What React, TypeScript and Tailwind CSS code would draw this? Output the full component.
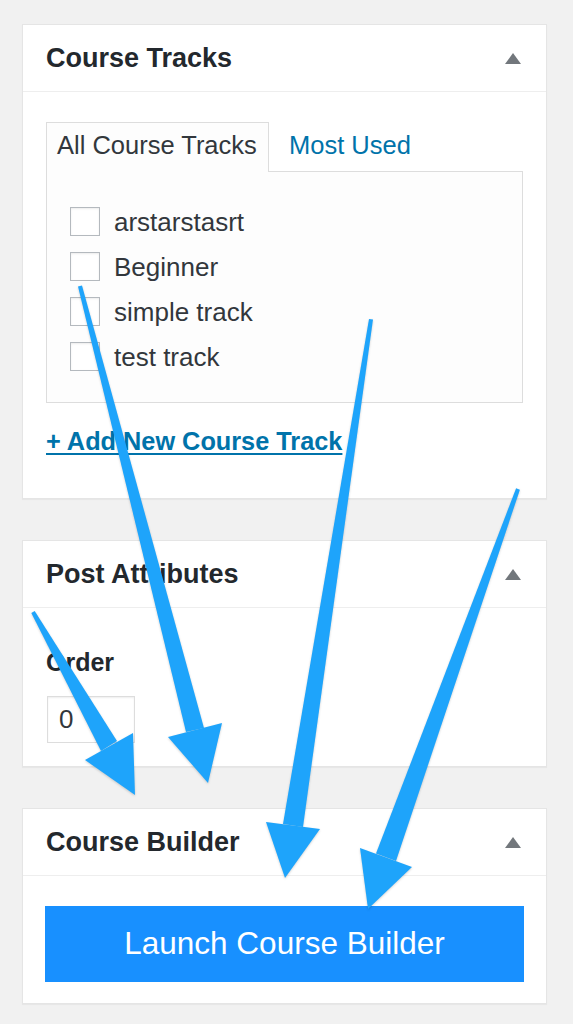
import React from "react";

const tracks = ["arstarstasrt", "Beginner", "simple track", "test track"];

function Caret() {
  return (
    <svg width="16" height="11" viewBox="0 0 16 11">
      <polygon points="8,0 16,11 0,11" fill="#72777c" />
    </svg>
  );
}

function Panel({ title, children }: { title: string; children: React.ReactNode }) {
  return (
    <div className="ml-[22px] w-[525px] bg-white border border-[#e5e5e5] shadow-[0_1px_1px_rgba(0,0,0,0.04)]">
      <div className="h-[67px] border-b border-[#eeeeee] flex items-center justify-between pl-[23px] pr-[25px]">
        <h2 className="text-[27px] font-bold text-[#23282d] leading-none">{title}</h2>
        <Caret />
      </div>
      {children}
    </div>
  );
}

// annotation arrows drawn on top of the screenshot
const arrows = [
  {
    shaft: "78,286.5 82,285.5 204,728 186,732",
    head: "168,737 222,723 208,783",
  },
  {
    shaft: "31.3,613 34.7,611 117,741 101,751",
    head: "85,760 133,733 135,795",
  },
  {
    shaft: "369,319 373,319.6 303,827 283,824",
    head: "266,822 320,829 285,878",
  },
  {
    shaft: "516.1,488.3 519.9,489.7 396,861 376,853.5",
    head: "360,848 412,867 368,909",
  },
];

export default function App() {
  return (
    <main className="relative w-[573px] min-h-[1024px] bg-[#f1f1f1] pt-[24px] font-['Liberation_Sans',Arial,sans-serif] overflow-hidden">
      {/* Course Tracks */}
      <Panel title="Course Tracks">
        <div className="px-[23px] pt-[29px] pb-[42px]">
          <div className="flex items-end">
            <div className="relative z-10 -mb-px h-[50px] w-[223px] border border-b-0 border-[#dddddd] bg-[#fdfdfd] pl-[10px] pb-[4px] flex items-center text-[25.5px] text-[#32373c]">
              All Course Tracks
            </div>
            <div className="ml-[20px] h-[50px] pb-[2px] flex items-center text-[25.5px] text-[#0073aa]">
              Most Used
            </div>
          </div>
          <div className="h-[232px] border border-[#dddddd] bg-[#fdfdfd] pt-[35px] pl-[23px] flex flex-col gap-[16px]">
            {tracks.map((t) => (
              <label key={t} className="flex items-center h-[29px]">
                <span className="w-[30px] h-[29px] border border-[#b4b9be] bg-white shadow-[inset_0_1px_2px_rgba(0,0,0,0.08)]" />
                <span className="ml-[14px] text-[26px] text-[#32373c] leading-none">{t}</span>
              </label>
            ))}
          </div>
          <a className="block mt-[23px] h-[30px] leading-[30px] text-[25.3px] font-bold text-[#0073aa] underline underline-offset-[3px]">
            + Add New Course Track
          </a>
        </div>
      </Panel>

      {/* Post Attributes */}
      <div className="mt-[41px]">
        <Panel title="Post Attributes">
          <div className="px-[23px] pt-[39px] pb-[23px]">
            <p className="h-[30px] leading-[30px] text-[25px] font-bold text-[#23282d]">Order</p>
            <div className="mt-[19px] ml-px w-[88px] h-[47px] border border-[#dddddd] bg-white shadow-[inset_0_1px_2px_rgba(0,0,0,0.07)] flex items-center pl-[11px] text-[26px] text-[#32373c]">
              0
            </div>
          </div>
        </Panel>
      </div>

      {/* Course Builder */}
      <div className="mt-[41px]">
        <Panel title="Course Builder">
          <div className="px-[22px] pt-[30px] pb-[21px]">
            <button className="w-[479px] h-[76px] bg-[#1890ff] text-white text-[31.5px] flex items-center justify-center">
              Launch Course Builder
            </button>
          </div>
        </Panel>
      </div>

      <svg
        className="absolute inset-0 pointer-events-none"
        width="573"
        height="1024"
        viewBox="0 0 573 1024"
      >
        <g fill="#1ea4fb" style={{ filter: "drop-shadow(0 1px 1px rgba(0,0,0,0.18))" }}>
          {arrows.map((a, i) => (
            <g key={i}>
              <polygon points={a.shaft} />
              <polygon points={a.head} />
            </g>
          ))}
        </g>
      </svg>
    </main>
  );
}
